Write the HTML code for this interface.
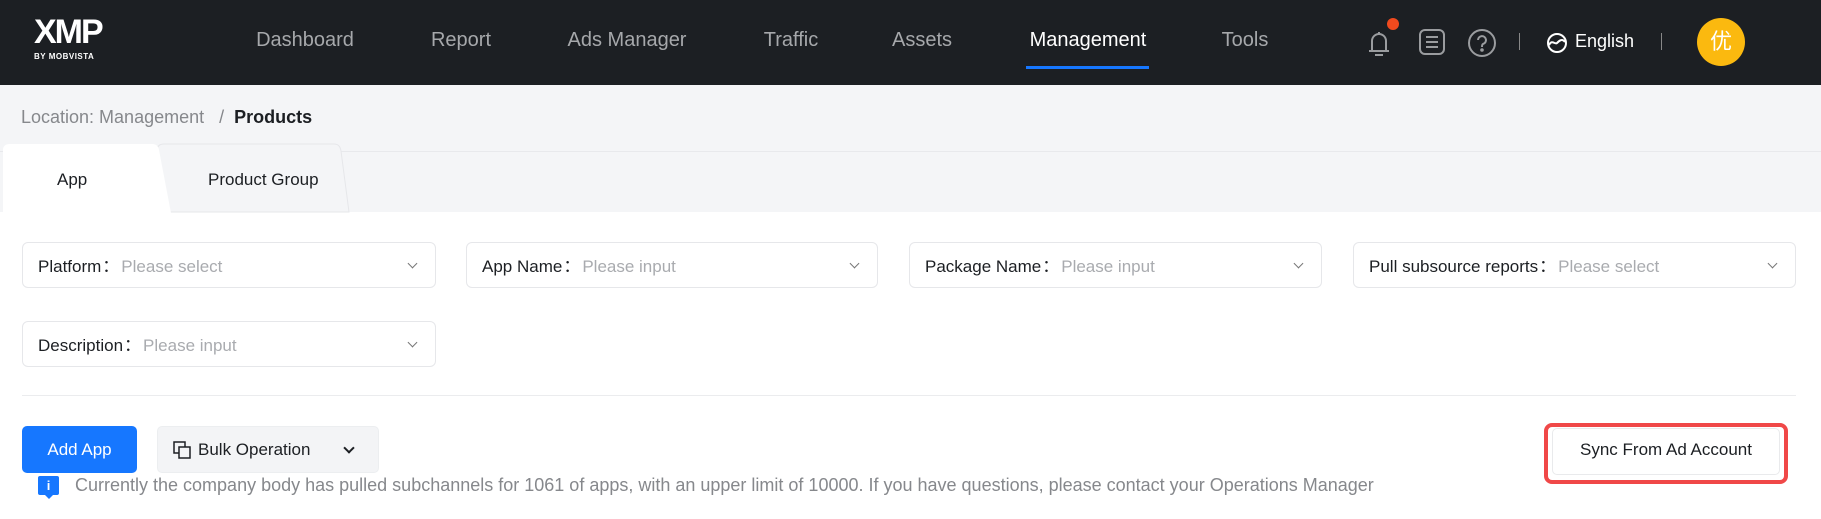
<!DOCTYPE html>
<html><head><meta charset="utf-8"><style>
*{box-sizing:border-box;margin:0;padding:0}
body{width:1821px;height:519px;overflow:hidden;background:#fff;font-family:"Liberation Sans","Noto Sans CJK SC",sans-serif;position:relative}
.abs{position:absolute}
.nav{left:0;top:0;width:1821px;height:85px;background:#1c1f23}
.ni{position:absolute;top:29px;font-size:20px;color:#a6a8ab;white-space:nowrap;transform:translateX(-50%)}
.crumb{left:0;top:85px;width:1821px;height:127px;background:#f4f5f7}
.box{position:absolute;height:46px;border:1px solid #e6e7ea;border-radius:6px;background:#fff;font-size:17px;line-height:44px;padding-left:15px;color:#1c1f23}
.box b{font-weight:normal;font-family:"Noto Sans CJK SC",sans-serif;margin-left:1px}
.box span{color:#a9abaf;margin-left:2px}
.box i{position:absolute;right:19px;top:17px;width:7px;height:7px;border-right:1.5px solid #777;border-bottom:1.5px solid #777;transform:rotate(45deg)}
</style></head><body>
<div class="abs nav">
  <div class="abs" style="left:34px;top:14px;color:#fff;font-weight:bold;font-size:34px;letter-spacing:-2px;line-height:36px">XMP</div>
  <div class="abs" style="left:34px;top:52px;color:#fff;font-size:8px;font-weight:bold;letter-spacing:.5px">BY MOBVISTA</div>
  <div class="ni" style="left:305px">Dashboard</div>
  <div class="ni" style="left:461px">Report</div>
  <div class="ni" style="left:627px">Ads Manager</div>
  <div class="ni" style="left:791px">Traffic</div>
  <div class="ni" style="left:922px">Assets</div>
  <div class="ni" style="left:1088px;color:#fff">Management</div>
  <div class="ni" style="left:1245px">Tools</div>
  <div class="abs" style="left:1026px;top:66px;width:123px;height:3px;background:#1677ff"></div>
  <svg class="abs" style="left:1364px;top:26px" width="30" height="32" viewBox="0 0 30 32" fill="none" stroke="#9a9c9f" stroke-width="2"><path d="M5 25 L25 25 M8 25 V15 a7 7 0 0 1 14 0 V25 M15 6 v2 M11 29 h8"/></svg>
  <div class="abs" style="left:1387px;top:18px;width:12px;height:12px;border-radius:50%;background:#f04a1e"></div>
  <svg class="abs" style="left:1418px;top:28px" width="28" height="28" viewBox="0 0 28 28" fill="none" stroke="#9a9c9f" stroke-width="2"><rect x="2" y="2" width="24" height="24" rx="5"/><path d="M8 9h12M8 14h12M8 19h12"/></svg>
  <svg class="abs" style="left:1467px;top:28px" width="30" height="30" viewBox="0 0 30 30" fill="none" stroke="#9a9c9f" stroke-width="2"><circle cx="15" cy="15" r="13"/><path d="M11 12a4 4 0 1 1 5 4c-1 .5-1 1.5-1 3"/><circle cx="15" cy="22" r=".8" fill="#9a9c9f"/></svg>
  <div class="abs" style="left:1519px;top:33px;width:1px;height:17px;background:#888"></div>
  <svg class="abs" style="left:1546px;top:32px" width="22" height="22" viewBox="0 0 22 22" fill="none" stroke="#fff" stroke-width="2"><circle cx="11" cy="11" r="9"/><path d="M3 13c3-6 6 0 8-2s5-5 8-1"/></svg>
  <div class="abs" style="left:1575px;top:31px;color:#fff;font-size:18px">English</div>
  <div class="abs" style="left:1661px;top:33px;width:1px;height:17px;background:#888"></div>
  <div class="abs" style="left:1697px;top:18px;width:48px;height:48px;border-radius:50%;background:#fbb90f;color:#fff;font-size:22px;line-height:48px;text-align:center">优</div>
</div>
<div class="abs crumb">
  <div class="abs" style="left:21px;top:22px;font-size:18px;color:#86888c">Location: Management &nbsp;&nbsp;/ &nbsp;<b style="color:#1c1f23">Products</b></div>
  <div class="abs" style="left:0;top:66px;width:1821px;height:1px;background:#e8e9ec"></div>
  <svg class="abs" style="left:0;top:58px" width="360" height="70"><path d="M157 69 L157 8 Q157 1 164 1 L334 1 Q340 1 341 8 L349 69 Z" fill="#f4f5f7" stroke="#e6e7ea"/><path d="M3 70 L3 7 Q3 1 10 1 L152 1 Q158 1 159 7 L171 70 Z" fill="#fff"/></svg>
  <div class="abs" style="left:57px;top:85px;font-size:17px;color:#1c1f23">App</div>
  <div class="abs" style="left:208px;top:85px;font-size:17px;color:#1c1f23">Product Group</div>
</div>
<div class="box" style="left:22px;top:242px;width:414px">Platform<b>：</b><span>Please select</span><i></i></div>
<div class="box" style="left:466px;top:242px;width:412px">App Name<b>：</b><span>Please input</span><i></i></div>
<div class="box" style="left:909px;top:242px;width:413px">Package Name<b>：</b><span>Please input</span><i></i></div>
<div class="box" style="left:1353px;top:242px;width:443px">Pull subsource reports<b>：</b><span>Please select</span><i></i></div>
<div class="box" style="left:22px;top:321px;width:414px">Description<b>：</b><span>Please input</span><i></i></div>
<div class="abs" style="left:22px;top:395px;width:1774px;height:1px;background:#ebecee"></div>
<div class="abs" style="left:22px;top:426px;width:115px;height:47px;background:#1677ff;border-radius:5px;color:#fff;font-size:17px;line-height:47px;text-align:center">Add App</div>
<div class="abs" style="left:157px;top:426px;width:222px;height:47px;background:#f3f4f6;border:1px solid #eceef0;border-radius:5px;font-size:17px;line-height:45px;color:#1c1f23;padding-left:40px">Bulk Operation
  <svg class="abs" style="left:15px;top:14px" width="18" height="18" viewBox="0 0 18 18" fill="none" stroke="#1c1f23" stroke-width="1.5"><rect x="1" y="1" width="11" height="11"/><rect x="6" y="6" width="11" height="11" fill="#f3f4f6"/></svg>
  <i style="position:absolute;right:25px;top:17px;width:8px;height:8px;border-right:2px solid #1c1f23;border-bottom:2px solid #1c1f23;transform:rotate(45deg)"></i></div>
<div class="abs" style="left:1544px;top:423px;width:244px;height:61px;border:4px solid #f04848;border-radius:8px"></div>
<div class="abs" style="left:1552px;top:428px;width:228px;height:47px;border:1px solid #e9eaec;border-radius:5px;background:#fff;font-size:17px;line-height:42px;text-align:center;color:#1c1f23">Sync From Ad Account</div>
<div class="abs" style="left:38px;top:476px;width:21px;height:19px;background:#1677ff;border-radius:2px;color:#fff;font-size:13px;font-weight:bold;text-align:center;line-height:19px">i</div>
<div class="abs" style="left:44px;top:494px;width:0;height:0;border-left:5px solid transparent;border-right:5px solid transparent;border-top:5px solid #1677ff"></div>
<div class="abs" style="left:75px;top:475px;font-size:18px;color:#86888c;white-space:nowrap">Currently the company body has pulled subchannels for 1061 of apps, with an upper limit of 10000. If you have questions, please contact your Operations Manager</div>
</body></html>
